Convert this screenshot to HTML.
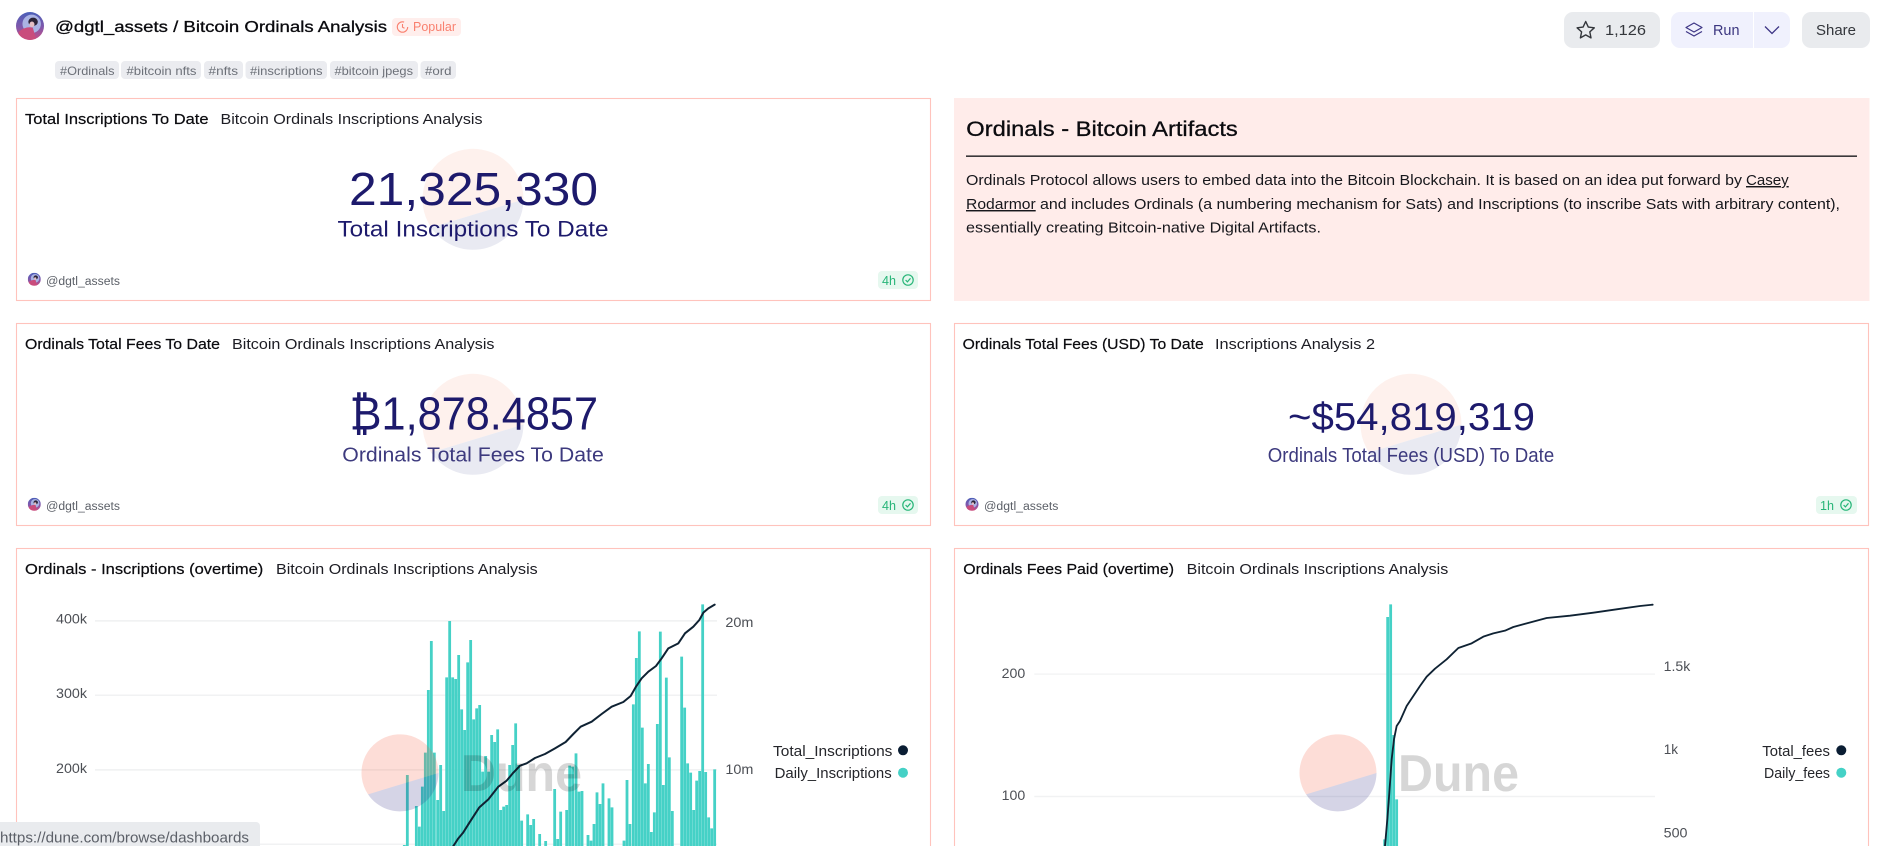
<!DOCTYPE html>
<html lang="en"><head><meta charset="utf-8"><title>@dgtl_assets / Bitcoin Ordinals Analysis</title>
<style>
html,body{margin:0;padding:0;background:#fff;width:1878px;height:846px;overflow:hidden}
svg{display:block}
text{font-family:"Liberation Sans","DejaVu Sans",sans-serif;white-space:pre}
.ttl{font-size:16px;fill:#0b0b0f;stroke:#0b0b0f;stroke-width:.3}
.tag{font-size:12px;fill:#6c7078}
.ct{font-size:14.5px;fill:#0b0b0f;stroke:#0b0b0f;stroke-width:.2}
.cs{font-size:14.5px;fill:#1d1d24}
.num{font-size:46px;fill:#1d1a6c}
.lab{font-size:22px;fill:#1d1a6c}
.lab2{font-size:20.500px;fill:#3d3a7e}
.ft{font-size:11.5px;fill:#5c6068}
.bd{font-size:12.5px;fill:#27b578}
.ax{font-size:14px;fill:#4c4f55}
.lg{font-size:14.5px;fill:#25262b}
.p{font-size:14.5px;fill:#17171c}
.btn{font-size:15px;fill:#33363b}
.run{font-size:15px;fill:#3b3680}
.wm{font-size:52px;font-weight:bold;fill:#000;fill-opacity:.16}
</style></head><body>
<svg xmlns="http://www.w3.org/2000/svg" width="1878" height="846" viewBox="0 0 1878 846">
<defs>
<clipPath id="avc"><circle cx="0" cy="0" r="1"/></clipPath>
<linearGradient id="avg" x1="0" y1="0" x2="0" y2="1"><stop offset="0" stop-color="#4a5fb8"/><stop offset=".55" stop-color="#8258ab"/><stop offset="1" stop-color="#c94c82"/></linearGradient>
<g id="av" clip-path="url(#avc)">
<rect x="-1" y="-1" width="2" height="2" fill="url(#avg)"/>
<circle cx=".12" cy="-.15" r=".66" fill="#aab3e4"/>
<ellipse cx=".22" cy="-.3" rx=".34" ry=".3" fill="#2c2438"/>
<ellipse cx=".14" cy="-.12" rx=".18" ry=".2" fill="#e4bfc4"/>
<path d="M-.8 1V.4Q-.3 0 .2.12L.45 1Z" fill="#c94c7c"/>
</g>
<g id="wmk"><path d="M1 0A1 1 0 1 0-.83.554Z" fill="#f5644b" fill-opacity=".22"/><path d="M1 0A1 1 0 0 1-.83.554Z" fill="#1e1978" fill-opacity=".19"/></g>
<g id="sm"><path d="M1 0A1 1 0 1 0-.83.554Z" fill="#fef1ed"/><path d="M1 0A1 1 0 0 1-.83.554Z" fill="#e9eaf2"/></g>
<g id="chk" fill="none" stroke="#27b578" stroke-width="1.2"><circle r="5.2"/><path d="M-2.4 0L-.6 1.9 2.5-1.7"/></g>
</defs>

<!-- header -->
<use href="#av" transform="translate(30 26) scale(14)"/>
<text class="ttl" x="55" y="32" textLength="332" lengthAdjust="spacingAndGlyphs">@dgtl_assets / Bitcoin Ordinals Analysis</text>
<rect x="392" y="18" width="69" height="18" rx="4" fill="#ffeeec"/>
<circle cx="402.500" cy="27" r="5.2" fill="none" stroke="#f9806f" stroke-width="1.1" stroke-dasharray="26 7"/>
<path d="M402.500 24v3.2l2 1" fill="none" stroke="#f9806f" stroke-width="1.1"/>
<text x="413" y="31" font-size="12.5" fill="#f9806f" textLength="43" lengthAdjust="spacingAndGlyphs">Popular</text>

<g fill="#ebecf0">
<rect x="55" y="61" width="64" height="18" rx="4"/><rect x="121" y="61" width="80" height="18" rx="4"/><rect x="204" y="61" width="39" height="18" rx="4"/><rect x="245.500" y="61" width="81.500" height="18" rx="4"/><rect x="330" y="61" width="88" height="18" rx="4"/><rect x="420.500" y="61" width="35.500" height="18" rx="4"/>
</g>
<text class="tag" x="60" y="75" textLength="54.500" lengthAdjust="spacingAndGlyphs">#Ordinals</text>
<text class="tag" x="126.500" y="75" textLength="70" lengthAdjust="spacingAndGlyphs">#bitcoin nfts</text>
<text class="tag" x="208.500" y="75" textLength="29.500" lengthAdjust="spacingAndGlyphs">#nfts</text>
<text class="tag" x="250" y="75" textLength="72.500" lengthAdjust="spacingAndGlyphs">#inscriptions</text>
<text class="tag" x="334.500" y="75" textLength="78.500" lengthAdjust="spacingAndGlyphs">#bitcoin jpegs</text>
<text class="tag" x="425" y="75" textLength="26.500" lengthAdjust="spacingAndGlyphs">#ord</text>

<!-- top buttons -->
<rect x="1564" y="12" width="96" height="36" rx="9" fill="#e9ebee"/>
<path d="M1585.700 21.500l2.600 5.600 6 .7-4.500 4.100 1.200 6-5.300-3-5.300 3 1.200-6-4.500-4.100 6-.7z" fill="none" stroke="#33363b" stroke-width="1.400" stroke-linejoin="round"/>
<text class="btn" x="1605" y="35" textLength="41" lengthAdjust="spacingAndGlyphs">1,126</text>
<rect x="1671" y="12" width="119" height="36" rx="9" fill="#f0f1fd"/>
<rect x="1753" y="12" width="1" height="36" fill="#fff"/>
<path d="M1686 27.500L1694 23 1702 27.500 1694 32ZM1686 31.500L1694 36 1702 31.500" fill="none" stroke="#3d3585" stroke-width="1.200" stroke-linejoin="round"/>
<text class="run" x="1713" y="35" textLength="26.500" lengthAdjust="spacingAndGlyphs">Run</text>
<path d="M1765 26.500L1772 33.500 1779 26.500" fill="none" stroke="#3d3585" stroke-width="1.300"/>
<rect x="1802" y="12" width="68" height="36" rx="9" fill="#e9ebee"/>
<text class="btn" x="1816" y="35" textLength="40" lengthAdjust="spacingAndGlyphs">Share</text>

<!-- cards -->
<g fill="#fff" stroke="#ffc3bc" stroke-width="1.100">
<rect x="16.500" y="98.500" width="914" height="202"/>
<rect x="16.500" y="323.500" width="914" height="202"/>
<rect x="954.500" y="323.500" width="914" height="202"/>
<rect x="16.500" y="548.500" width="914" height="320"/>
<rect x="954.500" y="548.500" width="914" height="320"/>
</g>
<rect x="954" y="98" width="915.500" height="203" fill="#ffecea"/>

<!-- card 1 -->
<use href="#sm" transform="translate(473 199.500) scale(50.500)"/>
<text class="ct" x="25" y="124" textLength="183.500" lengthAdjust="spacingAndGlyphs">Total Inscriptions To Date</text>
<text class="cs" x="220.500" y="124" textLength="262" lengthAdjust="spacingAndGlyphs">Bitcoin Ordinals Inscriptions Analysis</text>
<text class="num" x="349" y="205" textLength="249" lengthAdjust="spacingAndGlyphs">21,325,330</text>
<text class="lab" x="337.500" y="236.500" textLength="271" lengthAdjust="spacingAndGlyphs">Total Inscriptions To Date</text>
<use href="#av" transform="translate(34.300 279.300) scale(6.500)"/>
<text class="ft" x="46" y="285" textLength="74" lengthAdjust="spacingAndGlyphs">@dgtl_assets</text>
<rect x="878" y="271" width="40" height="18" rx="4" fill="#e6f8ef"/>
<text class="bd" x="882" y="285" textLength="14" lengthAdjust="spacingAndGlyphs">4h</text>
<use href="#chk" x="908" y="280"/>

<!-- text panel -->
<text x="966.300" y="136" font-size="21" fill="#0b0b0f" stroke="#0b0b0f" stroke-width=".3" textLength="271.500" lengthAdjust="spacingAndGlyphs">Ordinals - Bitcoin Artifacts</text>
<rect x="966" y="155.500" width="891" height="1.300" fill="#0b0b0f"/>
<text class="p" x="966" y="185" textLength="776" lengthAdjust="spacingAndGlyphs">Ordinals Protocol allows users to embed data into the Bitcoin Blockchain. It is based on an idea put forward by</text>
<text class="p" x="1746" y="185" textLength="42.700" lengthAdjust="spacingAndGlyphs" text-decoration="underline">Casey</text>
<text class="p" x="966" y="209" textLength="69.700" lengthAdjust="spacingAndGlyphs" text-decoration="underline">Rodarmor</text>
<text class="p" x="1040" y="209" textLength="800" lengthAdjust="spacingAndGlyphs">and includes Ordinals (a numbering mechanism for Sats) and Inscriptions (to inscribe Sats with arbitrary content),</text>
<text class="p" x="966" y="232.500" textLength="355" lengthAdjust="spacingAndGlyphs">essentially creating Bitcoin-native Digital Artifacts.</text>

<!-- card 2 -->
<use href="#sm" transform="translate(473 424.500) scale(50.500)"/>
<text class="ct" x="25" y="349" textLength="195" lengthAdjust="spacingAndGlyphs">Ordinals Total Fees To Date</text>
<text class="cs" x="232" y="349" textLength="262.500" lengthAdjust="spacingAndGlyphs">Bitcoin Ordinals Inscriptions Analysis</text>
<text class="num" x="349.500" y="429.300" textLength="248.500" lengthAdjust="spacingAndGlyphs">₿1,878.4857</text>
<text class="lab2" x="342.300" y="461.700" textLength="261.500" lengthAdjust="spacingAndGlyphs">Ordinals Total Fees To Date</text>
<use href="#av" transform="translate(34.300 504.300) scale(6.500)"/>
<text class="ft" x="46" y="510" textLength="74" lengthAdjust="spacingAndGlyphs">@dgtl_assets</text>
<rect x="878" y="496" width="40" height="18" rx="4" fill="#e6f8ef"/>
<text class="bd" x="882" y="510" textLength="14" lengthAdjust="spacingAndGlyphs">4h</text>
<use href="#chk" x="908" y="505"/>

<!-- card 3 -->
<use href="#sm" transform="translate(1411 424.500) scale(50.500)"/>
<text class="ct" x="962.700" y="349" textLength="241" lengthAdjust="spacingAndGlyphs">Ordinals Total Fees (USD) To Date</text>
<text class="cs" x="1215" y="349" textLength="160" lengthAdjust="spacingAndGlyphs">Inscriptions Analysis 2</text>
<text x="1288" y="430" font-size="39" fill="#1d1a6c" textLength="247" lengthAdjust="spacingAndGlyphs">~$54,819,319</text>
<text class="lab2" x="1267.800" y="462" textLength="286.400" lengthAdjust="spacingAndGlyphs">Ordinals Total Fees (USD) To Date</text>
<use href="#av" transform="translate(972 504.300) scale(6.500)"/>
<text class="ft" x="984" y="510" textLength="74.400" lengthAdjust="spacingAndGlyphs">@dgtl_assets</text>
<rect x="1816" y="496" width="41" height="18" rx="4" fill="#e6f8ef"/>
<text class="bd" x="1820" y="510" textLength="14" lengthAdjust="spacingAndGlyphs">1h</text>
<use href="#chk" x="1846" y="505"/>

<!-- chart 1 -->
<text class="ct" x="25" y="574" textLength="238.300" lengthAdjust="spacingAndGlyphs">Ordinals - Inscriptions (overtime)</text>
<text class="cs" x="276" y="574" textLength="261.700" lengthAdjust="spacingAndGlyphs">Bitcoin Ordinals Inscriptions Analysis</text>
<g fill="#f1f2f3"><rect x="95" y="620" width="622" height="1.700"/><rect x="95" y="694.500" width="622" height="1.500"/><rect x="95" y="769" width="622" height="1.700"/><rect x="95" y="843.500" width="622" height="1.500"/></g>
<text class="ax" x="56" y="623.700" textLength="31" lengthAdjust="spacingAndGlyphs">400k</text>
<text class="ax" x="56" y="698" textLength="31" lengthAdjust="spacingAndGlyphs">300k</text>
<text class="ax" x="56" y="773" textLength="31" lengthAdjust="spacingAndGlyphs">200k</text>
<text class="ax" x="725.400" y="627" textLength="28" lengthAdjust="spacingAndGlyphs">20m</text>
<text class="ax" x="725.400" y="774" textLength="28" lengthAdjust="spacingAndGlyphs">10m</text>
<g transform="translate(400 590) scale(.33333)">
<path fill="none" stroke="#45d1c6" stroke-width="8.400" d="M13 780V765M22 780V555M49 780V648M58 780V710M67 780V590M76 780V488M85 780V300M94 780V153M103 780V488M113 780V630M122 780V525M131 780V663M140 780V262M149 780V93M158 780V262M167 780V267M176 780V195M185 780V358M194 780V420M203 780V217M212 780V150M221 780V388M230 780V355M239 780V345M248 780V545M257 780V498M266 780V545M275 780V435M284 780V456M293 780V418M302 780V660M311 780V650M320 780V645M329 780V525M338 780V465M347 780V400M356 780V525M365 780V692M383 780V673M392 780V705M401 780V687M419 780V732M437 780V753M464 780V597M473 780V747M482 780V665M500 780V660M509 780V527M518 780V530M528 780V490M537 780V605M546 780V603M564 780V735M573 780V752M582 780V702M591 780V607M600 780V642M609 780V580M627 780V625M636 780V652M672 780V752M681 780V570M690 780V702M700 780V343M709 780V204M718 780V124M727 780V413M736 780V580M745 780V522M754 780V726M763 780V667M772 780V402M781 780V125M790 780V585M799 780V263M808 780V502M817 780V663M845 780V200M854 780V353M863 780V520M872 780V548M881 780V660M890 780V572M899 780V543M908 780V43M917 780V546M926 780V682M935 780V715M944 780V538"/>
<polyline fill="none" stroke="#0f2233" stroke-width="6" stroke-linejoin="round" stroke-linecap="round" points="160,768 175,745 190,727 210,695 238,652 265,628 295,590 320,572 340,548 360,527 380,520 405,504 435,492 465,475 497,456 520,432 542,410 575,395 605,372 635,350 670,336 692,318 708,290 725,265 745,245 768,228 785,205 805,175 835,160 855,130 880,110 898,90 910,68 925,55 944,44"/>
</g>
<use href="#wmk" transform="translate(400 773) scale(38.500)"/>
<text class="wm" x="461" y="791" textLength="121" lengthAdjust="spacingAndGlyphs">Dune</text>
<text class="lg" x="773" y="756" textLength="119.400" lengthAdjust="spacingAndGlyphs">Total_Inscriptions</text>
<text class="lg" x="774.600" y="778" textLength="117.100" lengthAdjust="spacingAndGlyphs">Daily_Inscriptions</text>
<circle cx="903" cy="750.300" r="5" fill="#0a1d33"/><circle cx="903" cy="772.700" r="5" fill="#45d1c6"/>

<!-- chart 2 -->
<text class="ct" x="963.300" y="574" textLength="210.700" lengthAdjust="spacingAndGlyphs">Ordinals Fees Paid (overtime)</text>
<text class="cs" x="1186.700" y="574" textLength="261.600" lengthAdjust="spacingAndGlyphs">Bitcoin Ordinals Inscriptions Analysis</text>
<g fill="#f1f2f3"><rect x="1034.300" y="673.500" width="620.700" height="1.200"/><rect x="1034.300" y="795.800" width="620.700" height="1.400"/></g>
<text class="ax" x="1001.700" y="678" textLength="23.600" lengthAdjust="spacingAndGlyphs">200</text>
<text class="ax" x="1001.700" y="800" textLength="23.600" lengthAdjust="spacingAndGlyphs">100</text>
<text class="ax" x="1663.700" y="671" textLength="26.600" lengthAdjust="spacingAndGlyphs">1.5k</text>
<text class="ax" x="1663.700" y="754" textLength="14.300" lengthAdjust="spacingAndGlyphs">1k</text>
<text class="ax" x="1663.700" y="837.700" textLength="23.800" lengthAdjust="spacingAndGlyphs">500</text>
<g transform="translate(950 546) scale(.33333)">
<path fill="none" stroke="#45d1c6" stroke-width="8.400" d="M1304 910V880M1313 910V213M1322 910V175M1331 910V567M1340 910V760"/>
<polyline fill="none" stroke="#0f2233" stroke-width="5.500" stroke-linejoin="round" stroke-linecap="round" points="1305,900 1312,820 1318,740 1325,640 1332,580 1340,540 1350,525 1370,480 1390,450 1410,420 1430,392 1455,368 1490,340 1525,306 1565,292 1600,272 1630,262 1665,254 1690,243 1730,232 1790,216 1860,209 1930,200 2000,190 2070,180 2108,176"/>
</g>
<use href="#wmk" transform="translate(1338 773) scale(38.500)"/>
<text class="wm" x="1398" y="791" textLength="121" lengthAdjust="spacingAndGlyphs">Dune</text>
<text class="lg" x="1762.300" y="756" textLength="67.700" lengthAdjust="spacingAndGlyphs">Total_fees</text>
<text class="lg" x="1764" y="778" textLength="66" lengthAdjust="spacingAndGlyphs">Daily_fees</text>
<circle cx="1841.300" cy="750.300" r="5" fill="#0a1d33"/><circle cx="1841.300" cy="772.700" r="5" fill="#45d1c6"/>

<!-- status bar -->
<path d="M0 822H256a4 4 0 0 1 4 4V846H0Z" fill="#e9ebee"/>
<text x="0" y="842.500" font-size="14.500" fill="#5c6068" textLength="249" lengthAdjust="spacingAndGlyphs">https://dune.com/browse/dashboards</text>
</svg>
</body></html>
